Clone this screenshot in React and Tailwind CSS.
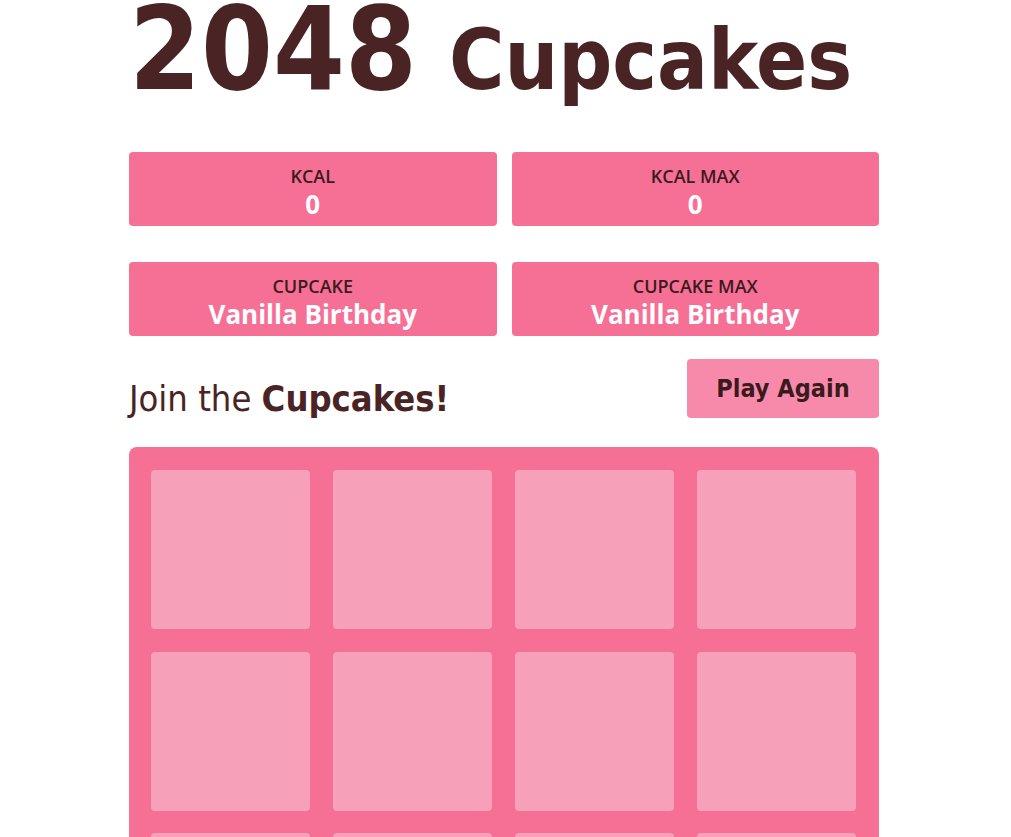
const Stat = ({ label, value }) => (
    <div className="flex-1 h-[74px] rounded-[4px] bg-[#f67096] flex flex-col items-center justify-center pt-[5px]">
        <div className="text-[18px] leading-[22px] font-semibold text-[#3b1a1d]">{label}</div>
        <div className="mt-[2px] text-[26px] leading-[30px] font-bold text-white">{value}</div>
    </div>
);

export default function App() {
    const tiles = Array.from({ length: 16 });
    return (
        <div className="w-[750px] ml-[129px] pb-10 bg-white" style={{ fontFamily: "'Open Sans', Lato, sans-serif" }}>
            <h1
                className="flex items-baseline gap-[32px] text-[#4a2424] font-bold leading-none"
                style={{ fontFamily: "'DejaVu Sans Condensed', 'DejaVu Sans', sans-serif" }}
            >
                <span className="text-[115px] leading-[98px]">2048</span>
                <span className="text-[84px]">Cupcakes</span>
            </h1>

            <div className="mt-[50px] flex gap-[15px]">
                <Stat label="KCAL" value="0" />
                <Stat label="KCAL MAX" value="0" />
            </div>
            <div className="mt-[36px] flex gap-[15px]">
                <Stat label="CUPCAKE" value="Vanilla Birthday" />
                <Stat label="CUPCAKE MAX" value="Vanilla Birthday" />
            </div>

            <div
                className="mt-[13px] flex items-center justify-between"
                style={{ fontFamily: "'DejaVu Sans Condensed', 'DejaVu Sans', sans-serif" }}
            >
                <p className="text-[36px] leading-[54px] text-[#4a2424] pt-[23px] pb-[2px]">
                    Join the <b className="font-bold">Cupcakes!</b>
                </p>
                <button className="w-[192px] h-[59px] rounded-[4px] bg-[#f78aab] text-[#3b1a1d] text-[25px] font-bold">
                    Play Again
                </button>
            </div>

            <div className="mt-[19px] rounded-[8px] bg-[#f67096] pt-[23px] pb-[22px] pl-[22px] pr-[23px] grid grid-cols-[repeat(4,159px)] justify-between gap-y-[22.5px]">
                {tiles.map((_, i) => (
                    <div key={i} className="h-[159px] rounded-[4px] bg-[#f6a0b9]" />
                ))}
            </div>
        </div>
    );
}
